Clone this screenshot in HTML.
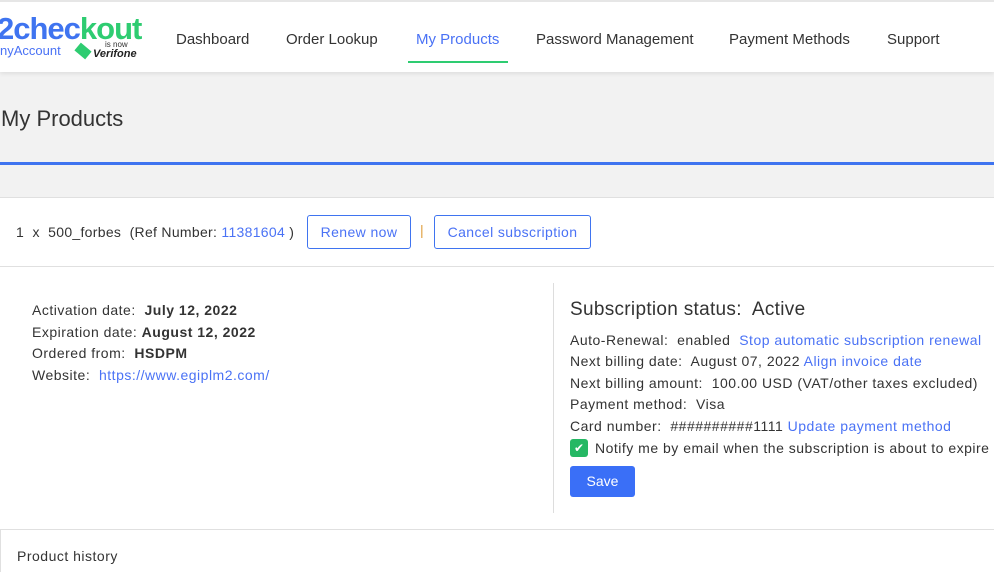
<!DOCTYPE html><html><head><style>
body{margin:0;width:994px;height:571px;overflow:hidden;background:#f2f2f2;font-family:"Liberation Sans",sans-serif;color:#333;position:relative}
.hdr{position:absolute;left:0;top:0;width:994px;height:72px;background:#fff;border-top:2px solid #e6e6e6;box-sizing:border-box;box-shadow:0 2px 4px rgba(0,0,0,.08)}
.nav{position:absolute;top:29px;font-size:15px;color:#333}
.a{color:#4a72f5}
.t{position:absolute;left:1px;top:106px;font-size:22px;color:#333}
.bl{position:absolute;left:0;top:162px;width:994px;height:3px;background:#3f74f0}
.card{position:absolute;left:0;top:197px;width:994px;height:374px;background:#fff;border-top:1px solid #e0e0e0;overflow:hidden}
.l{position:absolute;font-size:14px;color:#333;white-space:nowrap;letter-spacing:0.5px}
.btn{position:absolute;border:1px solid #3f74f0;border-radius:3px;color:#4a72f5;font-size:14px;text-align:center;box-sizing:border-box;letter-spacing:0.4px}
b{font-weight:bold;color:#333}
</style></head><body>
<div class="hdr">
<div style="position:absolute;left:-3px;top:9px;font-size:31px;font-weight:bold;letter-spacing:-1px;color:#3f74f0">2chec<span style="color:#2ecc71">kout</span></div>
<div style="position:absolute;left:0;top:41px;font-size:13px;color:#4a72f5">nyAccount</div>
<div style="position:absolute;left:76px;top:44px;width:14px;height:10px;background:#2ecc71;transform:rotate(40deg)"></div>
<div style="position:absolute;left:105px;top:38px;font-size:8px;color:#333">is now</div>
<div style="position:absolute;left:93px;top:46px;font-size:11px;font-weight:bold;font-style:italic;color:#222">Verifone</div>
<div class="nav" style="left:176px">Dashboard</div>
<div class="nav" style="left:286px">Order Lookup</div>
<div class="nav a" style="left:416px">My Products</div>
<div style="position:absolute;left:408px;top:59px;width:100px;height:2px;background:#2ecc71"></div>
<div class="nav" style="left:536px">Password Management</div>
<div class="nav" style="left:729px">Payment Methods</div>
<div class="nav" style="left:887px">Support</div>
</div>
<div class="t">My Products</div>
<div class="bl"></div>
<div class="card">
<div class="l" style="left:16px;top:26px;letter-spacing:0.3px">1&nbsp; x&nbsp; 500_forbes&nbsp; (Ref Number: <span class="a">11381604</span> )</div>
<div class="btn" style="left:307px;top:17px;width:104px;height:34px;line-height:32px">Renew now</div>
<div class="l" style="left:420px;top:24px;color:#e0a040">|</div>
<div class="btn" style="left:434px;top:17px;width:157px;height:34px;line-height:32px">Cancel subscription</div>
<div style="position:absolute;left:0;top:68px;width:994px;height:1px;background:#e0e0e0"></div>
<div class="l" style="left:32px;top:104px">Activation date:&nbsp; <b>July 12, 2022</b></div>
<div class="l" style="left:32px;top:126px">Expiration date: <b>August 12, 2022</b></div>
<div class="l" style="left:32px;top:147px">Ordered from:&nbsp; <b>HSDPM</b></div>
<div class="l" style="left:32px;top:169px">Website:&nbsp; <span class="a">https://www.egiplm2.com/</span></div>
<div style="position:absolute;left:553px;top:85px;width:1px;height:230px;background:#ddd"></div>
<div class="l" style="left:570px;top:101px;font-size:19px;letter-spacing:0.3px">Subscription status:&nbsp; Active</div>
<div class="l" style="left:570px;top:134px">Auto-Renewal:&nbsp; enabled&nbsp; <span class="a">Stop automatic subscription renewal</span></div>
<div class="l" style="left:570px;top:155px">Next billing date:&nbsp; August 07, 2022 <span class="a">Align invoice date</span></div>
<div class="l" style="left:570px;top:177px">Next billing amount:&nbsp; 100.00 USD (VAT/other taxes excluded)</div>
<div class="l" style="left:570px;top:198px">Payment method:&nbsp; Visa</div>
<div class="l" style="left:570px;top:220px">Card number:&nbsp; ##########1111 <span class="a">Update payment method</span></div>
<div style="position:absolute;left:570px;top:241px;width:18px;height:18px;background:#25b864;border-radius:3px;color:#fff;font-size:12px;text-align:center;line-height:18px">✔</div>
<div class="l" style="left:595px;top:242px">Notify me by email when the subscription is about to expire</div>
<div style="position:absolute;left:570px;top:268px;width:65px;height:31px;background:#3a6ff7;border-radius:3px;color:#fff;font-size:14px;text-align:center;line-height:31px">Save</div>
<div style="position:absolute;left:0;top:331px;width:994px;height:1px;background:#e0e0e0"></div>
<div style="position:absolute;left:0;top:331px;width:1px;height:50px;background:#e0e0e0"></div>
<div class="l" style="left:17px;top:350px">Product history</div>
</div>
</body></html>
